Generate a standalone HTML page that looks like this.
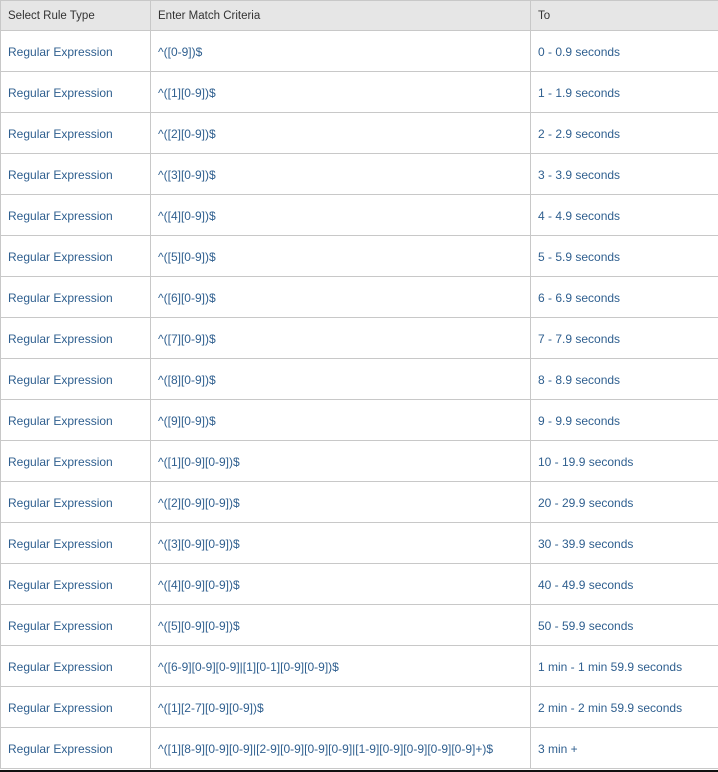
<!DOCTYPE html><html><head><style>
body{margin:0;background:#fff;width:718px;height:772px;overflow:hidden;position:relative;font-family:"Liberation Sans",Arial,sans-serif;}
table{border-collapse:collapse;position:absolute;left:0;top:0;width:718px;table-layout:fixed}
td,th{border:1px solid #c8c8c8;padding:1px 0 0 7px;font-size:12px;text-align:left;white-space:nowrap;overflow:hidden}
th{height:28px;background:#e6e6e6;color:#333;font-weight:normal;font-size:11.5px}
td{height:39px;color:#2f5f8f}
.bar{position:absolute;left:0;top:770px;width:718px;height:2px;background:#111}
</style></head><body>
<table>
<colgroup><col style="width:150px"><col style="width:380px"><col style="width:188px"></colgroup>
<tr><th>Select Rule Type</th><th>Enter Match Criteria</th><th>To</th></tr>
<tr><td>Regular Expression</td><td>^([0-9])$</td><td>0 - 0.9 seconds</td></tr>
<tr><td>Regular Expression</td><td>^([1][0-9])$</td><td>1 - 1.9 seconds</td></tr>
<tr><td>Regular Expression</td><td>^([2][0-9])$</td><td>2 - 2.9 seconds</td></tr>
<tr><td>Regular Expression</td><td>^([3][0-9])$</td><td>3 - 3.9 seconds</td></tr>
<tr><td>Regular Expression</td><td>^([4][0-9])$</td><td>4 - 4.9 seconds</td></tr>
<tr><td>Regular Expression</td><td>^([5][0-9])$</td><td>5 - 5.9 seconds</td></tr>
<tr><td>Regular Expression</td><td>^([6][0-9])$</td><td>6 - 6.9 seconds</td></tr>
<tr><td>Regular Expression</td><td>^([7][0-9])$</td><td>7 - 7.9 seconds</td></tr>
<tr><td>Regular Expression</td><td>^([8][0-9])$</td><td>8 - 8.9 seconds</td></tr>
<tr><td>Regular Expression</td><td>^([9][0-9])$</td><td>9 - 9.9 seconds</td></tr>
<tr><td>Regular Expression</td><td>^([1][0-9][0-9])$</td><td>10 - 19.9 seconds</td></tr>
<tr><td>Regular Expression</td><td>^([2][0-9][0-9])$</td><td>20 - 29.9 seconds</td></tr>
<tr><td>Regular Expression</td><td>^([3][0-9][0-9])$</td><td>30 - 39.9 seconds</td></tr>
<tr><td>Regular Expression</td><td>^([4][0-9][0-9])$</td><td>40 - 49.9 seconds</td></tr>
<tr><td>Regular Expression</td><td>^([5][0-9][0-9])$</td><td>50 - 59.9 seconds</td></tr>
<tr><td>Regular Expression</td><td>^([6-9][0-9][0-9]|[1][0-1][0-9][0-9])$</td><td>1 min - 1 min 59.9 seconds</td></tr>
<tr><td>Regular Expression</td><td>^([1][2-7][0-9][0-9])$</td><td>2 min - 2 min 59.9 seconds</td></tr>
<tr><td>Regular Expression</td><td>^([1][8-9][0-9][0-9]|[2-9][0-9][0-9][0-9]|[1-9][0-9][0-9][0-9][0-9]+)$</td><td>3 min +</td></tr>
</table>
<div class="bar"></div>
</body></html>
